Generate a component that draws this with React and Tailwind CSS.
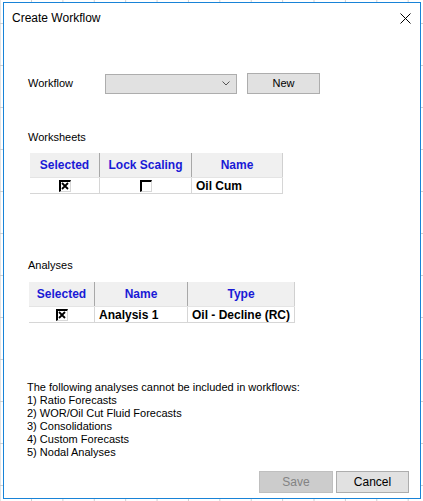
import React from "react";

const sans = { fontFamily: '"Liberation Sans", Arial, sans-serif' };

function Check({ checked }) {
  return (
    <div className="w-[12px] h-[12px] border-l-2 border-t-2 border-r border-b border-l-[#000] border-t-[#000] border-r-[#d8d8d8] border-b-[#d8d8d8] bg-white flex items-center justify-center">
      {checked && (
        <svg width="8" height="8" viewBox="0 0 8 8">
          <path d="M1 1 L7 7 M7 1 L1 7" stroke="#000" strokeWidth="1.8" />
        </svg>
      )}
    </div>
  );
}

function Table({ cols, row }) {
  return (
    <div className="w-fit flex flex-col" style={sans}>
      <div className="flex h-[24px] bg-[#f0f0f0]">
        {cols.map((c, i) => (
          <div
            key={i}
            className={`flex items-center justify-center text-[12px] font-bold text-[#1a1ad6] ${i < cols.length - 1 ? "border-r border-[#a8a8a8]" : "border-r border-[#d0d0d0]"}`}
            style={{ width: c.w }}
          >
            {c.label}
          </div>
        ))}
      </div>
      <div className="flex h-[17px] bg-white border-b border-[#d6d6d6] border-t border-t-[#e4e4e4]">
        {row.map((r, i) => (
          <div
            key={i}
            className={`flex items-center text-[12px] font-bold text-black border-r border-[#d6d6d6] ${r.check !== undefined ? "justify-center" : "pl-[4px]"}`}
            style={{ width: cols[i].w }}
          >
            {r.check !== undefined ? <Check checked={r.check} /> : r.text}
          </div>
        ))}
      </div>
    </div>
  );
}

export default function App() {
  return (
    <div className="w-[423px] h-[501px] overflow-hidden bg-white bg-[linear-gradient(to_right,#cfcfcf_1px,transparent_1px),linear-gradient(to_bottom,#cfcfcf_1px,transparent_1px)] bg-size-[31.4px_42px] bg-position-[31px_23px] pt-[2px] pl-[3px]">
      <div className="w-[418px] h-[497px] border border-[#1883d7] bg-white flex flex-col">
        <div className="h-[30px] flex items-center justify-between pl-[8px] pr-[9px]">
          <span className="text-[12px] leading-[16px] text-black" style={sans}>Create Workflow</span>
          <svg width="11" height="11" viewBox="0 0 11 11">
            <path d="M0.5 0.5 L10.5 10.5 M10.5 0.5 L0.5 10.5" stroke="#000" strokeWidth="1" />
          </svg>
        </div>

        <div className="mt-[40px] pl-[24px] flex items-center" style={sans}>
          <span className="w-[77px] text-[11px] text-black">Workflow</span>
          <div className="w-[132px] h-[20px] bg-[#e1e1e1] border border-[#adadad] flex items-center justify-end pr-[6px]">
            <svg width="8" height="5" viewBox="0 0 8 5">
              <path d="M0.5 0.5 L4 4 L7.5 0.5" stroke="#555" strokeWidth="1" fill="none" />
            </svg>
          </div>
          <div className="ml-[10px] w-[73px] h-[21px] bg-[#e1e1e1] border border-[#adadad] flex items-center justify-center text-[11px] text-black">
            New
          </div>
        </div>

        <div className="mt-[37px] pl-[24px] text-[11px] leading-[13px] text-black" style={sans}>Worksheets</div>
        <div className="mt-[9px] pl-[26px]">
          <Table
            cols={[{ label: "Selected", w: 70 }, { label: "Lock Scaling", w: 92 }, { label: "Name", w: 91 }]}
            row={[{ check: true }, { check: false }, { text: "Oil Cum" }]}
          />
        </div>

        <div className="mt-[65px] pl-[24px] text-[11px] leading-[13px] text-black" style={sans}>Analyses</div>
        <div className="mt-[10px] pl-[25px]">
          <Table
            cols={[{ label: "Selected", w: 66 }, { label: "Name", w: 93 }, { label: "Type", w: 107 }]}
            row={[{ check: true }, { text: "Analysis 1" }, { text: "Oil - Decline (RC)" }]}
          />
        </div>

        <div className="mt-[58px] pl-[23px] text-[11px] leading-[13px] text-black flex flex-col" style={sans}>
          <span>The following analyses cannot be included in workflows:</span>
          <span>1) Ratio Forecasts</span>
          <span>2) WOR/Oil Cut Fluid Forecasts</span>
          <span>3) Consolidations</span>
          <span>4) Custom Forecasts</span>
          <span>5) Nodal Analyses</span>
        </div>

        <div className="mt-[12px] flex justify-end pr-[11px] gap-[3px]" style={sans}>
          <div className="w-[74px] h-[22px] bg-[#cccccc] border border-[#bfbfbf] flex items-center justify-center text-[12px] text-[#838383]">Save</div>
          <div className="w-[73px] h-[22px] bg-[#e1e1e1] border border-[#adadad] flex items-center justify-center text-[12px] text-black">Cancel</div>
        </div>
      </div>
    </div>
  );
}
